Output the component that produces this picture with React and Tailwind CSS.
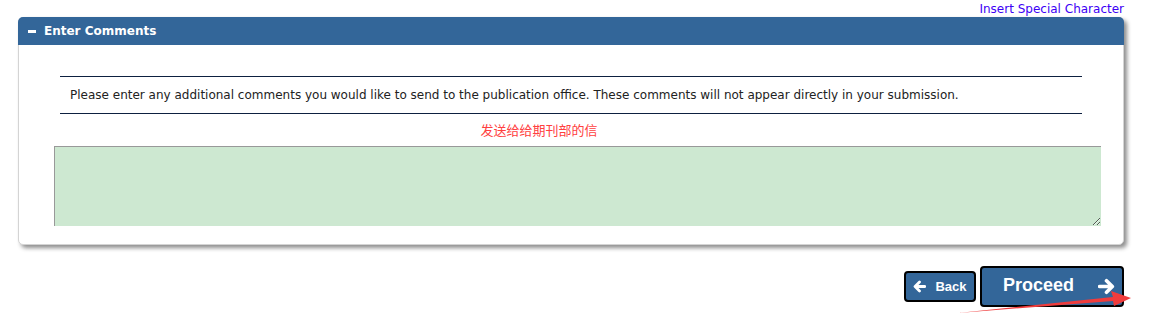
import React from 'react';

const verdana = { fontFamily: '"DejaVu Sans", Verdana, sans-serif' };

const Arrow = ({ left, className }) => (
  <svg viewBox="0 0 16 16" className={className} style={left ? { transform: 'scaleX(-1)' } : undefined}>
    <path d="M1.5 8H13M8 2.5L13.5 8L8 13.5" fill="none" stroke="white" strokeWidth="3.4" strokeLinecap="round" strokeLinejoin="round" />
  </svg>
);

export default function App() {
  return (
    <div className="relative w-[1175px] h-[328px] bg-white overflow-hidden" style={verdana}>
      <div className="flex justify-end pr-[51px] h-[17px] items-center">
        <a href="#" className="text-[12px] leading-none text-[#3d00f5]">Insert Special Character</a>
      </div>

      <div className="ml-[18px] w-[1106px] rounded-[5px] bg-white shadow-[3px_3px_4px_rgba(0,0,0,0.45)] border border-[#d4d4d4]">
        <div className="h-[28px] -m-px mb-0 rounded-t-[5px] bg-[#336699] flex items-center pl-[10px] text-white font-bold text-[12px]">
          <span className="w-[8px] h-[3px] bg-white mr-[8px]"></span>
          Enter Comments
        </div>

        <div className="pt-[31px] pb-[18px]">
          <div className="ml-[41px] w-[1022px] border-y border-[#0d2040] h-[38px] flex items-center pl-[10px] text-[12px] text-[#222]">
            Please enter any additional comments you would like to send to the publication office. These comments will not appear directly in your submission.
          </div>
          <div
            className="text-center text-[13px] text-[#ff4040] h-[32px] flex items-center justify-center pr-[64px]"
            style={{ fontFamily: '"Noto Sans CJK SC", sans-serif' }}
          >
            发送给给期刊部的信
          </div>
          <textarea className="block ml-[35px] w-[1047px] h-[80px] bg-[#cde8d1] border-t border-l border-[#999] outline-none" />
        </div>
      </div>

      <div className="flex justify-end items-center gap-[4px] pr-[51px] mt-[21px]">
        <button className="w-[72px] h-[31px] rounded-[4px] border-2 border-black bg-[#336699] text-white font-bold text-[13px] flex items-center justify-center gap-[9px]" style={{ fontFamily: '"Liberation Sans", Arial, sans-serif' }}>
          <Arrow left className="w-[13px] h-[13px]" />
          Back
        </button>
        <button className="relative w-[144px] h-[41px] rounded-[4px] border-2 border-black bg-[#336699] text-white font-bold text-[18px] flex items-center pl-[21px]" style={{ fontFamily: '"Liberation Sans", Arial, sans-serif' }}>
          <span className="-mt-[3px]">Proceed</span>
          <Arrow className="absolute right-[7px] top-[10px] w-[17px] h-[17px]" />
        </button>
      </div>

      <svg className="absolute left-0 top-0 pointer-events-none" width="1175" height="328">
        <polygon points="958,313 1113,297 1111,291 1131,298 1114,306 1113,301" fill="#f03c3c" />
      </svg>
    </div>
  );
}
